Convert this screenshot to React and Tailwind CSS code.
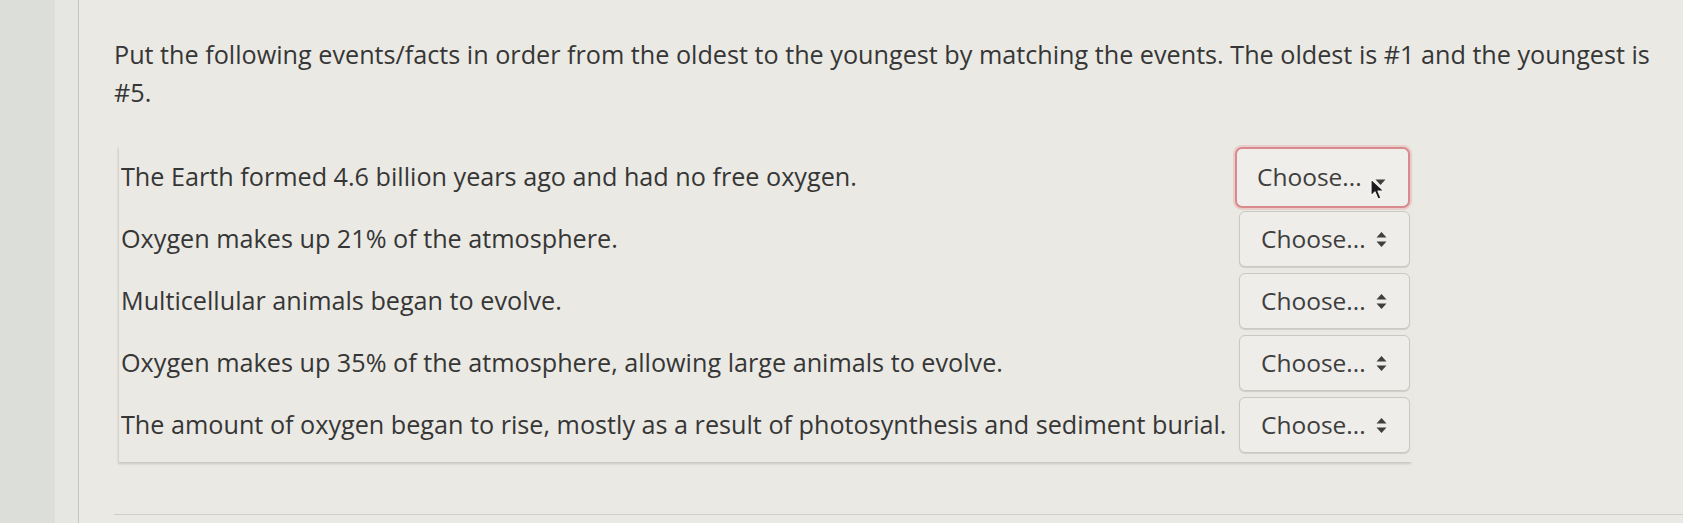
import React from "react";

const rows = [
  "The Earth formed 4.6 billion years ago and had no free oxygen.",
  "Oxygen makes up 21% of the atmosphere.",
  "Multicellular animals began to evolve.",
  "Oxygen makes up 35% of the atmosphere, allowing large animals to evolve.",
  "The amount of oxygen began to rise, mostly as a result of photosynthesis and sediment burial.",
];

function UpDown({ hideUp }) {
  return (
    <svg width="11" height="17" viewBox="0 0 11 17" className="shrink-0">
      {!hideUp && <path d="M5.5 1 L10.5 6.5 H0.5 Z" fill="#3f3f3f" />}
      <path d="M5.5 16 L10.5 10.5 H0.5 Z" fill="#3f3f3f" />
    </svg>
  );
}

function Cursor() {
  return (
    <svg width="16" height="24" viewBox="0 0 16 24" className="absolute left-[133px] top-[29px]">
      <path d="M1 1 L1 18 L5 14 L8 21 L11 20 L8 13 L14 13 Z" fill="#1c1c1c" stroke="#f5f5f5" strokeWidth="1.2" strokeLinejoin="round" />
    </svg>
  );
}

function Select({ focused }) {
  return (
    <div
      className={
        focused
          ? "relative flex h-[61px] w-[175px] shrink-0 items-center rounded-[7px] border-2 border-[#d98a8c] bg-[#efeeea] pl-[20px] pr-[22px] shadow-[0_0_0_2px_rgba(232,170,172,0.45)]"
          : "relative flex h-[56px] w-[171px] shrink-0 items-center rounded-[6px] border border-[#c9c9c4] bg-[#eeede9] pl-[21px] pr-[22px] shadow-[0_1px_1px_rgba(0,0,0,0.12)]"
      }
    >
      <span className="flex-1 whitespace-nowrap text-[24.5px] text-[#3e3e3e]">Choose...</span>
      <UpDown hideUp={focused} />
      {focused && <Cursor />}
    </div>
  );
}

export default function App() {
  return (
    <div
      className="relative flex h-[523px] w-[1683px] overflow-hidden bg-[#eae9e4] text-[#363636]"
      style={{ fontFamily: '"Open Sans", "Liberation Sans", sans-serif' }}
    >
      <div className="w-[55px] shrink-0 bg-[#dcdeda]" />
      <div className="w-[24px] shrink-0 border-r border-[#c6c7c3] bg-[#e6e6e2]" />
      <div className="flex flex-1 flex-col pl-[35px] pt-[35px]">
        <p className="w-[1560px] text-[25.2px] leading-[38px]">
          Put the following events/facts in order from the oldest to the youngest by matching the events. The oldest is #1 and the youngest is #5.
        </p>
        <div className="ml-[5px] mt-[35px] w-[1293px] pb-[6px] shadow-[-1px_2px_2px_rgba(0,0,0,0.14)]">
          {rows.map((t, i) => (
            <div key={i} className="flex h-[62px] items-center justify-between pl-[2px] pr-[2px]">
              <span className="whitespace-nowrap text-[25.2px] text-[#363636]">{t}</span>
              <Select focused={i === 0} />
            </div>
          ))}
        </div>
        <div className="mt-[52px] border-t border-[#cfcfca]" />
      </div>
    </div>
  );
}
